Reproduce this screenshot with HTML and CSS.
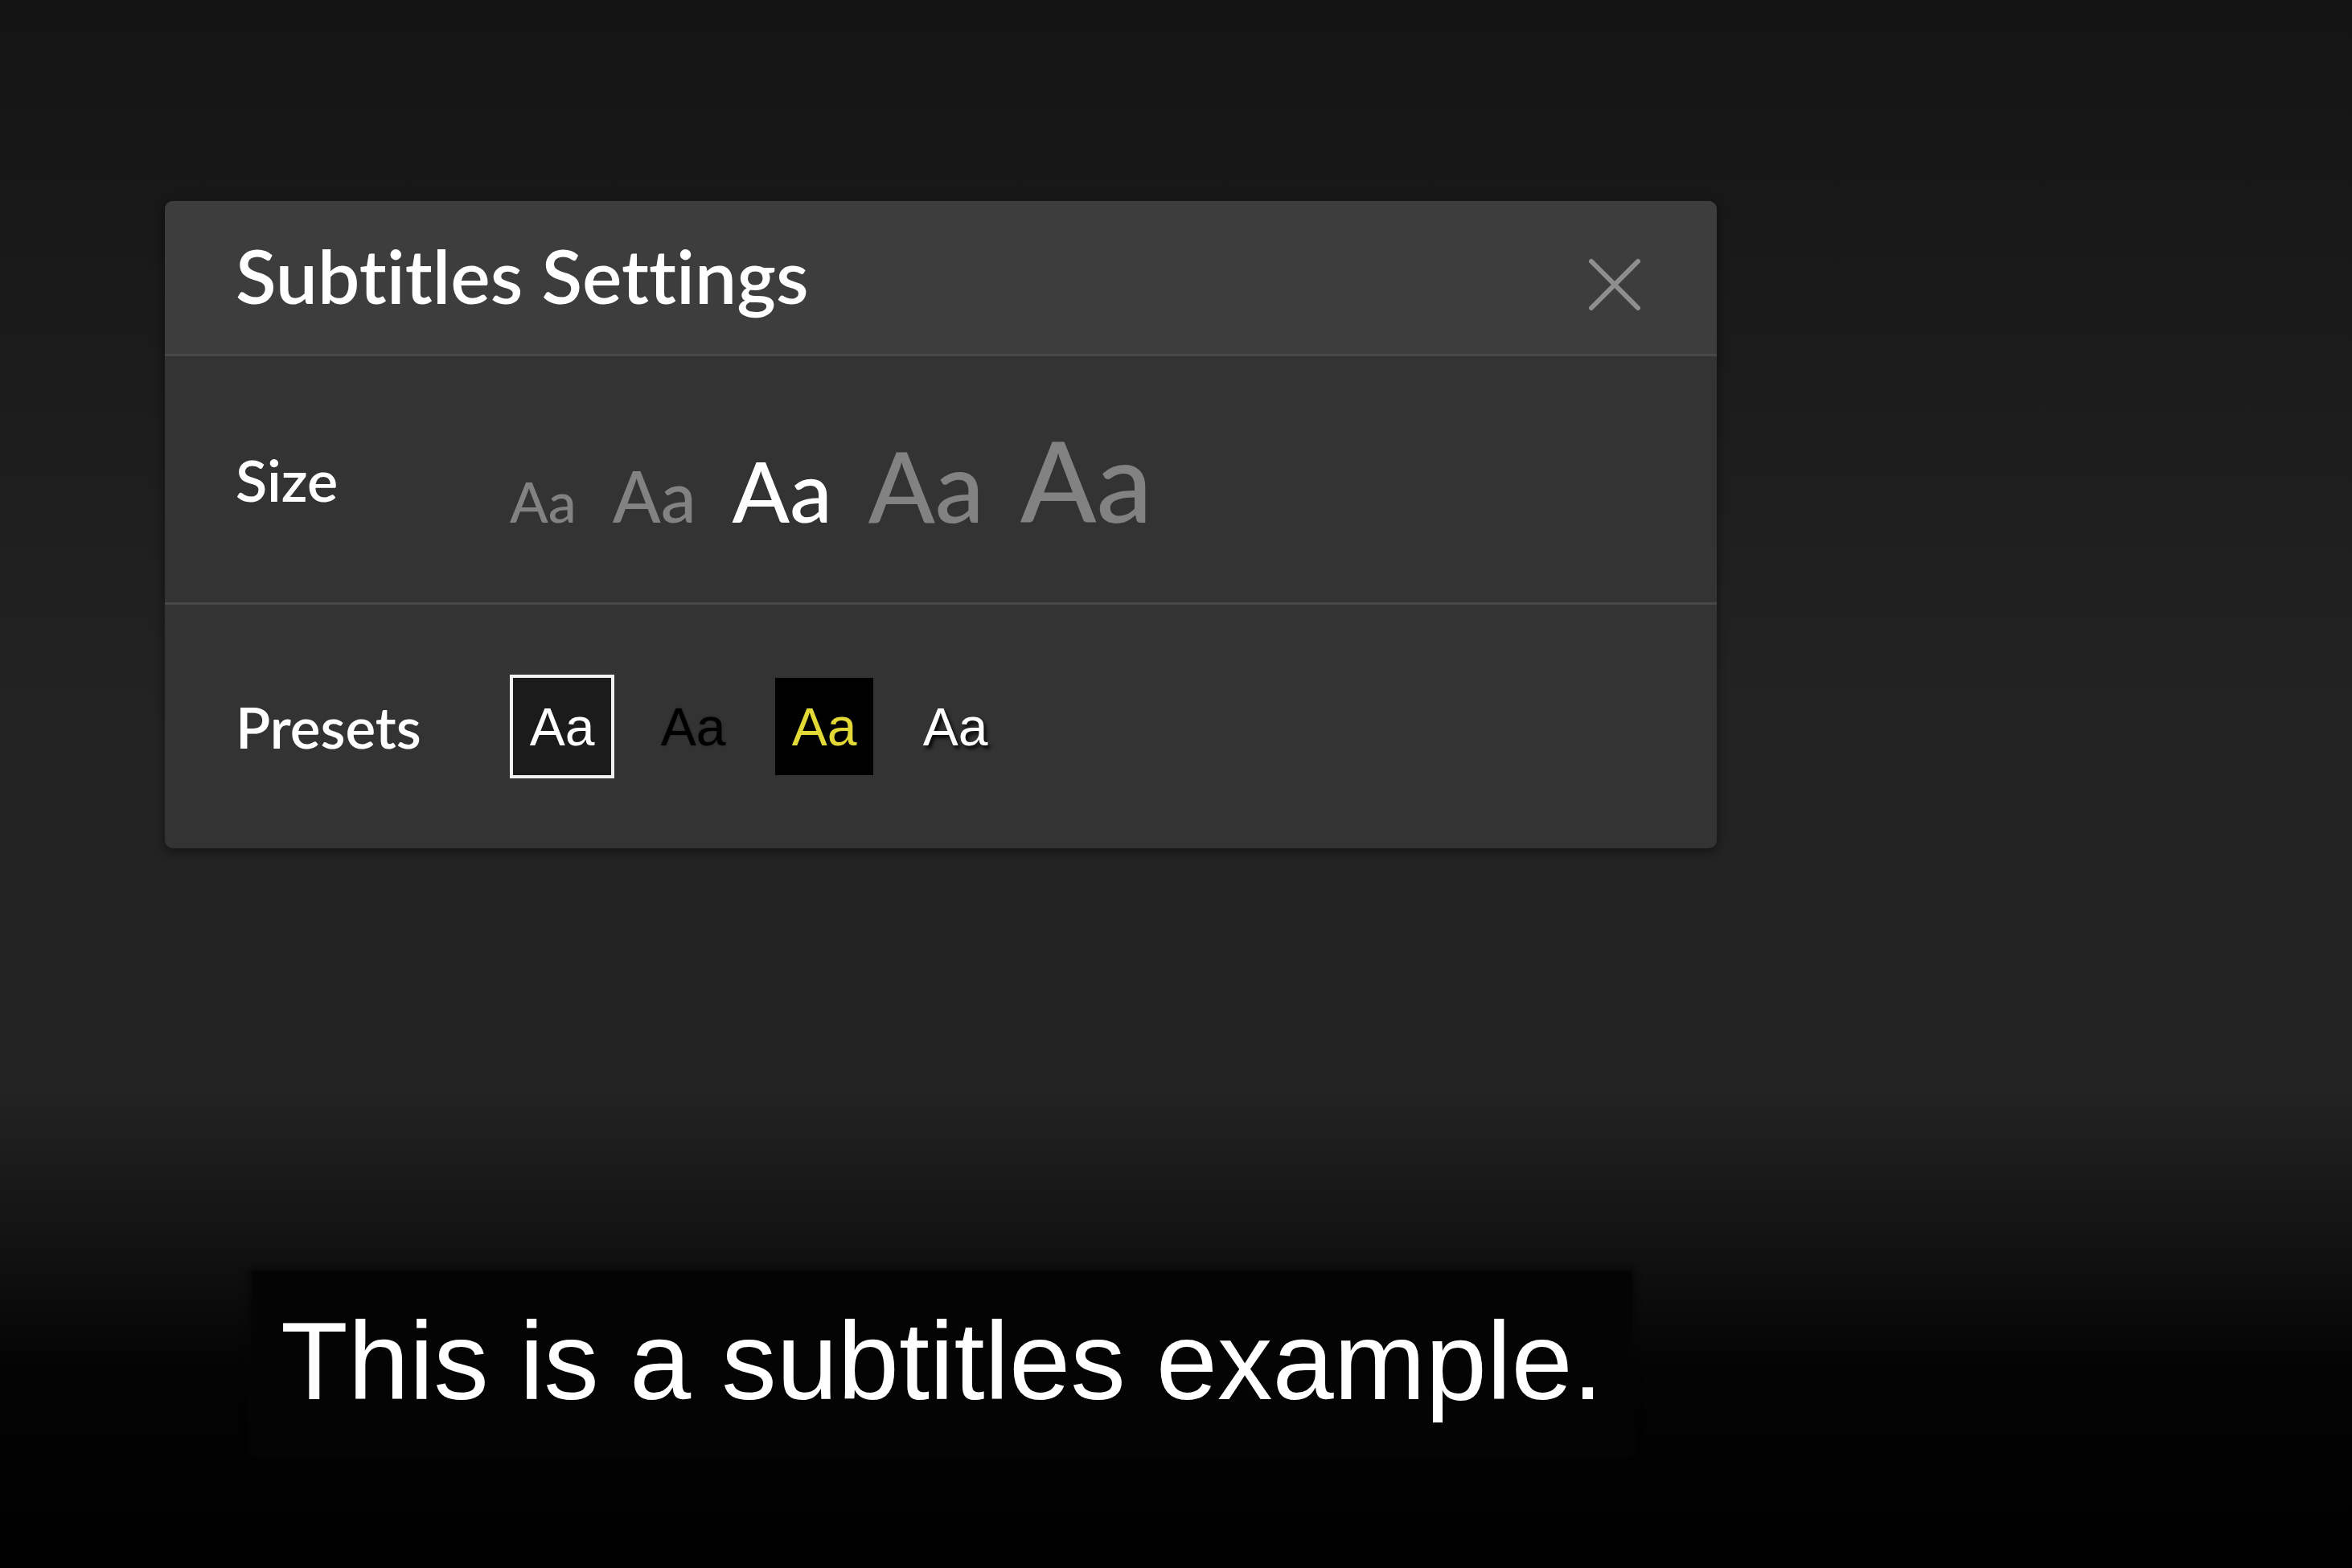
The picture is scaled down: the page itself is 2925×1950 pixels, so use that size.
FILE: index.html
```html
<!DOCTYPE html>
<html lang="en">
<head>
  <meta charset="UTF-8" />
  <meta name="viewport" content="width=device-width, initial-scale=1.0" />
  <title>Subtitles Settings</title>
  <link rel="stylesheet" href="styles.css">
</head>
<body>
  <section class="panel">
    <header class="panel-head">
      <h1>Subtitles Settings</h1>
      <button class="close" aria-label="Close">
        <svg width="64" height="64" viewBox="0 0 64 64">
          <path d="M3 3 L61 61 M61 3 L3 61" stroke="#8e8e8e" stroke-width="6" stroke-linecap="round" fill="none" />
        </svg>
      </button>
    </header>

    <div class="row">
      <span class="label">Size</span>
      <div class="sizes">
        <span class="size s1">Aa</span>
        <span class="size s2">Aa</span>
        <span class="size s3 active">Aa</span>
        <span class="size s4">Aa</span>
        <span class="size s5">Aa</span>
      </div>
    </div>

    <div class="row last">
      <span class="label">Presets</span>
      <div class="presets">
        <span class="preset p1 active">Aa</span>
        <span class="preset p2">Aa</span>
        <span class="preset p3">Aa</span>
        <span class="preset p4">Aa</span>
      </div>
    </div>
  </section>

  <div class="caption">This is a subtitles example.</div>
</body>
</html>
```

FILE: styles.css
```css
html, body {
  margin: 0;
  height: 100%;
}
body {
  min-height: 1950px;
  font-family: Lato, 'Open Sans', sans-serif;
  font-variant-ligatures: none;
  color: #fff;
  background: linear-gradient(#141414 0, #1c1c1c 500px, #232323 900px, #232323 1350px, #111111 1560px, #040404 1700px, #000 1950px);
  overflow: hidden;
}
.panel {
  width: 1930px;
  margin: 250px 0 0 205px;
  border-radius: 10px;
  background-color: #333;
  box-shadow: 0 4px 14px rgba(0,0,0,0.45);
  overflow: hidden;
}
.panel-head {
  display: flex;
  align-items: center;
  justify-content: space-between;
  height: 193px;
  padding: 0 95px 6px 88px;
  box-sizing: border-box;
  background-color: #3d3d3d;
  border-bottom: 3px solid #484848;
}
.panel-head h1 {
  margin: 0;
  font-size: 93px;
  font-weight: 600;
  line-height: 1;
}
.close {
  margin: 23px 0 0 0;
  padding: 0;
  border: 0;
  background: none;
  line-height: 0;
  cursor: pointer;
}
.row {
  display: flex;
  align-items: center;
  height: 306px;
  padding-left: 88px;
  border-bottom: 3px solid #484848;
}
.row.last {
  height: 303px;
  border-bottom: 0;
}
.label {
  width: 341px;
  flex-shrink: 0;
  font-size: 72px;
  font-weight: 600;
  line-height: 1;
}
.row.last .label {
  font-size: 71px;
}
.sizes {
  display: flex;
  align-items: baseline;
  gap: 45px;
  line-height: 1;
}
.size {
  color: #828282;
  font-weight: 500;
  cursor: pointer;
}
.size.active {
  color: #fff;
}
.s1 { font-size: 70px; }
.s2 { font-size: 88px; }
.s3 { font-size: 105px; }
.s4 { font-size: 122px; }
.s5 { font-size: 139px; }
.presets {
  display: flex;
  align-items: center;
  gap: 33px;
}
.preset {
  display: flex;
  align-items: center;
  justify-content: center;
  width: 122px;
  height: 121px;
  border: 4px solid transparent;
  font-family: 'Liberation Sans', Arial, sans-serif;
  font-size: 66px;
  line-height: 1;
  cursor: pointer;
  background-clip: padding-box;
}
.preset.active {
  border-color: #f2f2f2;
}
.p1 {
  background-color: #1b1b1b;
  color: #fff;
}
.p2 {
  color: #000;
  text-shadow: 0 0 3px rgba(0,0,0,0.4);
}
.p3 {
  background-color: #000;
  color: #e2d836;
}
.p4 {
  color: #fff;
  text-shadow: 3px 4px 4px rgba(0,0,0,0.85);
}
.caption {
  display: inline-block;
  margin: 526px 0 0 313px;
  padding: 43px 36px 48px 36px;
  font-family: 'Liberation Sans', Arial, sans-serif;
  font-size: 137px;
  line-height: 1;
  color: #fff;
  background-color: #040404;
  box-shadow: 0 0 8px 2px #060606;
}
```
